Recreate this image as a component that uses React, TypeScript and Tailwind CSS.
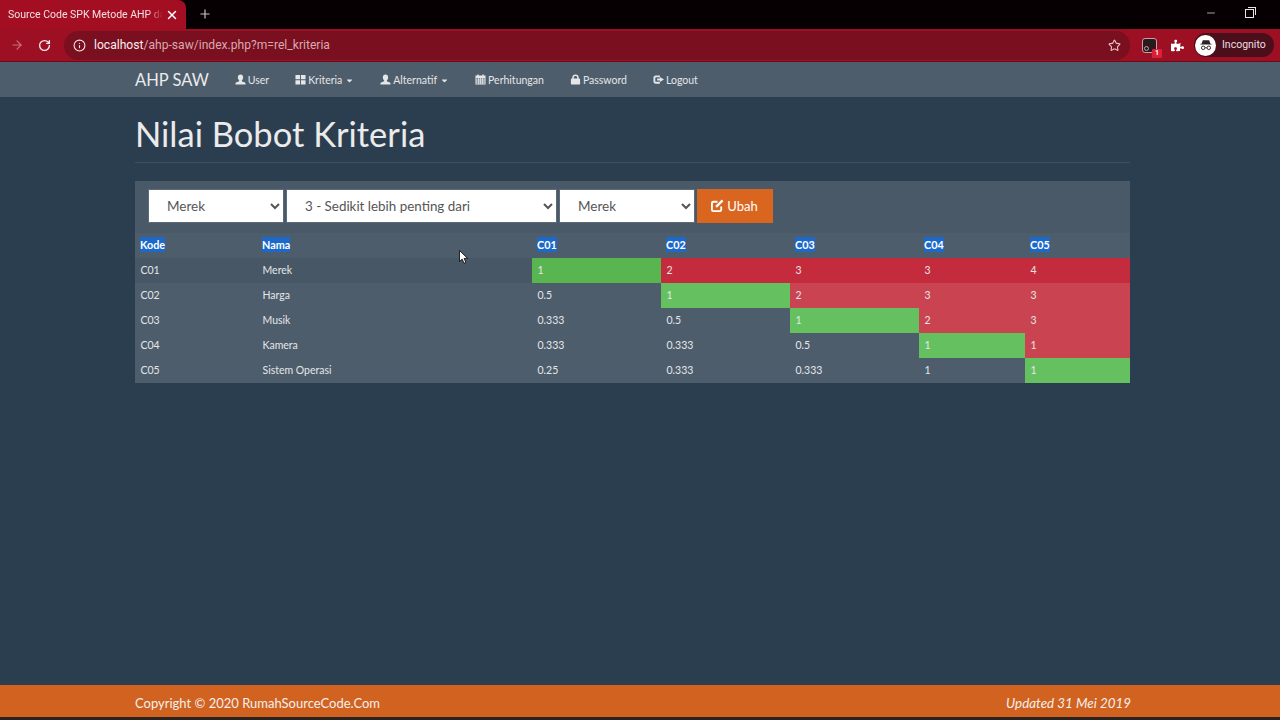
import type { ReactNode } from "react";
import { ArrowRight, RotateCw, Info, Star, Plus, X, Minus } from "lucide-react";
import { FaCaretDown, FaPuzzlePiece } from "react-icons/fa";

const columns = ["C01", "C02", "C03", "C04", "C05"];

const rows = [
  { kode: "C01", nama: "Merek", values: ["1", "2", "3", "3", "4"] },
  { kode: "C02", nama: "Harga", values: ["0.5", "1", "2", "3", "3"] },
  { kode: "C03", nama: "Musik", values: ["0.333", "0.5", "1", "2", "3"] },
  { kode: "C04", nama: "Kamera", values: ["0.333", "0.333", "0.5", "1", "1"] },
  { kode: "C05", nama: "Sistem Operasi", values: ["0.25", "0.333", "0.333", "1", "1"] },
];

// glyphicon style icons, drawn on a 12 box
const glyphs: Record<string, ReactNode> = {
  user: <path d="M6 0.5c1.8 0 2.9 1.4 2.9 3.2 0 1.3-.6 2.5-1.4 3.2v1c0 .5 3.7 1 4 2.1V11.5H.5v-1.5c.3-1.1 4-1.6 4-2.1v-1C3.7 6.200 3.100 5 3.100 3.700 3.100 1.900 4.200.5 6 .5z" />,
  grid: <path d="M0.500 1h5v4.700h-5zM6.500 1h5v4.700h-5zM0.500 6.700h5v4.700h-5zM6.500 6.700h5v4.700h-5z" />,
  calendar: (
    <path
      fillRule="evenodd"
      d="M0.500 1.500h2V.500h1.500v1h4v-1h1.500v1h2v10h-11zM1.500 4.500v1.500h2V4.500zM4.500 4.500v1.500h1.200V4.500zM6.700 4.500v1.500h1.200V4.500zM8.900 4.500v1.500h1.600V4.500zM1.500 7v1.200h2V7zM4.500 7v1.200h1.200V7zM6.700 7v1.200h1.200V7zM8.900 7v1.200h1.600V7zM1.500 9.200v1.200h2V9.200zM4.500 9.200v1.200h1.200V9.200zM6.700 9.200v1.200h1.200V9.200zM8.900 9.200v1.200h1.600V9.200z"
    />
  ),
  lock: (
    <path
      fillRule="evenodd"
      d="M2.500 5V3.800C2.500 1.800 4 .5 6 .5s3.500 1.300 3.500 3.300V5h.5c.6 0 1 .4 1 1v5c0 .3-.2.500-.5.500h-9c-.3 0-.5-.2-.5-.5V6c0-.6.4-1 1-1zM4.200 5h3.600V3.800C7.800 2.800 7 2.200 6 2.200s-1.800.6-1.800 1.600z"
    />
  ),
  logout: (
    <path
      fillRule="evenodd"
      d="M3 1.500h4.500v2H3.500c-.6 0-1 .4-1 1v3c0 .6.4 1 1 1h4v2H3c-1.600 0-2.500-1-2.500-2.500v-4C.5 2.500 1.400 1.500 3 1.500zM7.500 3.200L12 6l-4.500 2.800V7H4.500V5h3z"
    />
  ),
};

function Glyph({ name, className }: { name: string; className: string }) {
  return (
    <svg viewBox="0 0 12 12" className={className} fill="currentColor">
      {glyphs[name]}
    </svg>
  );
}

function BrowserChrome() {
  return (
    <div className="font-['Roboto',sans-serif]">
      <div className="flex h-[29px] items-end bg-[#070003] text-white">
        <div className="flex h-[29px] w-[186px] items-center rounded-tr-lg bg-[#a30e22] pl-[8px] pr-[6px]">
          <span className="w-[155px] overflow-hidden whitespace-nowrap text-[10.500px] text-[#f5dfe2] [mask-image:linear-gradient(to_right,black_90%,transparent)]">
            Source Code SPK Metode AHP dan SAW
          </span>
          <X className="ml-[2px] h-[14px] w-[14px]" strokeWidth={2.5} />
        </div>
        <Plus className="mb-[8px] ml-[12px] h-[14px] w-[14px] text-[#c9c4c5]" strokeWidth={2} />
        <div className="ml-auto mb-[10px] flex items-center gap-[28px] pr-[26px]">
          <Minus className="h-[12px] w-[12px] text-[#d8d8d8]" strokeWidth={1.5} />
          <div className="relative h-[9px] w-[9px] border border-[#e8e8e8]">
            <div className="absolute -right-[3px] -top-[3px] h-[8px] w-[8px] border-r border-t border-[#e8e8e8]" />
          </div>
        </div>
      </div>
      <div className="flex h-[33px] items-center border-b border-[#6d0a19] bg-[#9d0f22] text-white">
        <ArrowRight className="ml-[10px] h-[14px] w-[14px] text-[#c9707c]" strokeWidth={2} />
        <RotateCw className="ml-[14px] h-[13px] w-[13px] text-[#f6e6e8]" strokeWidth={2.5} />
        <div className="ml-[13px] flex h-[29px] w-[1066px] items-center rounded-full bg-[#790f1f] pl-[9px]">
          <Info className="h-[13px] w-[13px] text-[#f6e6e8]" strokeWidth={2} />
          <span className="ml-[8px] text-[12.100px] text-[#d9a9b0]">
            <span className="text-[#f8eef0]">localhost</span>/ahp-saw/index.php?m=rel_kriteria
          </span>
          <Star className="ml-auto mr-[9px] h-[13px] w-[13px] text-[#e8c8cc]" strokeWidth={2} />
        </div>
        <div className="relative ml-[12px] h-[15px] w-[15px] rounded-[3px] border border-[#c8a0a6] bg-[#2a1a1e]">
          <span className="absolute bottom-[1px] left-[1px] h-[5px] w-[5px] rounded-full border border-[#c8a0a6]" />
          <span className="absolute -bottom-[6px] -right-[6px] flex h-[9px] w-[10px] items-center justify-center rounded-[1px] bg-[#d92038] text-[7px] font-bold">
            1
          </span>
        </div>
        <FaPuzzlePiece className="ml-[14px] h-[13px] w-[13px]" />
        <div className="ml-[10px] flex h-[24px] w-[80px] items-center rounded-full bg-[#4a0f1a] pl-[1px]">
          <div className="flex h-[21px] w-[21px] items-center justify-center rounded-full bg-white">
            <svg viewBox="0 0 20 20" className="h-[16px] w-[16px]" fill="#2a2226">
              <path d="M6 4h8l1.500 4.500H17v1H3v-1h1.500z" />
              <circle cx="6.500" cy="13.500" r="2.200" fill="none" stroke="#2a2226" strokeWidth="1.200" />
              <circle cx="13.500" cy="13.500" r="2.200" fill="none" stroke="#2a2226" strokeWidth="1.200" />
              <path d="M8.700 13h2.600v1H8.700z" />
            </svg>
          </div>
          <span className="ml-[6px] text-[10.500px] text-[#eadfe1]">Incognito</span>
        </div>
      </div>
    </div>
  );
}

function NavItem({ icon, label, caret }: { icon: string; label: string; caret?: boolean }) {
  return (
    <a className="flex h-full items-center px-[13px] pt-[2px] text-[10.500px] text-[#e4e6e8]">
      <Glyph name={icon} className="-mt-[2px] mr-[2px] h-[11px] w-[11px]" />
      {label}
      {caret && <FaCaretDown className="ml-[3px] h-[9px] w-[9px]" />}
    </a>
  );
}

function Navbar() {
  return (
    <nav className="h-[35px] bg-[#4e5d6c]">
      <div className="ml-[135px] flex h-full w-[995px] items-center">
        <span className="pt-[1px] text-[16.500px] text-[#ebebeb]">AHP SAW</span>
        <div className="ml-[13px] flex h-full items-center">
          <NavItem icon="user" label="User" />
          <NavItem icon="grid" label="Kriteria" caret />
          <NavItem icon="user" label="Alternatif" caret />
          <NavItem icon="calendar" label="Perhitungan" />
          <NavItem icon="lock" label="Password" />
          <NavItem icon="logout" label="Logout" />
        </div>
      </div>
    </nav>
  );
}

function Picker({ width, value, wide }: { width: string; value: string; wide?: boolean }) {
  return (
    <select
      defaultValue={value}
      className={`h-[34px] ${width} border border-[#5d6a78] bg-white pl-[14px] text-[#555555] ${
        wide ? "text-[13.400px]" : "text-[13.500px]"
      }`}
    >
      <option>{value}</option>
    </select>
  );
}

function cellColor(row: number, col: number) {
  if (row === col) return row === 0 ? "bg-[#58b54f]" : "bg-[#65c15f]";
  if (col > row) return row === 0 ? "bg-[#c42b3c]" : "bg-[#ca4350]";
  return "";
}

function WeightTable() {
  const widths = ["w-[122px]", "w-[275px]", "w-[129px]", "w-[129px]", "w-[129px]", "w-[106px]", "w-[105px]"];
  return (
    <table className="w-[995px] table-fixed border-collapse text-[10.500px] text-[#e4e6e8]">
      <thead>
        <tr className="h-[25px] bg-[#4e5d6c]">
          {["Kode", "Nama", ...columns].map((title, i) => (
            <th key={title} className={`${widths[i]} pl-[5px] text-left text-[10.800px] font-bold`}>
              <span className="inline-block bg-[#1c69c9] leading-[15px] text-white">{title}</span>
            </th>
          ))}
        </tr>
      </thead>
      <tbody>
        {rows.map((row, r) => (
          <tr key={row.kode} className={`h-[25px] ${r === 0 ? "bg-[#485765]" : "bg-[#4e5d6c]"}`}>
            <td className="pl-[5.500px]">{row.kode}</td>
            <td className="pl-[5.500px]">{row.nama}</td>
            {row.values.map((value, c) => (
              <td key={c} className={`pl-[5.500px] ${cellColor(r, c)}`}>
                {value}
              </td>
            ))}
          </tr>
        ))}
      </tbody>
    </table>
  );
}

export default function App() {
  return (
    <div className="relative flex h-[720px] flex-col overflow-hidden bg-[#2b3e50] font-['Lato',sans-serif]">
      <BrowserChrome />
      <Navbar />
      <main className="ml-[135px] w-[995px] flex-1">
        <h1 className="mt-[17px] border-b border-[#3f505f] pb-[9px] text-[34.500px] leading-[39px] text-[#ebebeb]">
          Nilai Bobot Kriteria
        </h1>
        <div className="mt-[18px] flex h-[52px] items-start gap-[2px] bg-[#4a5968] pl-[13px] pt-[8px]">
          <Picker width="w-[136px]" value="Merek" />
          <Picker width="w-[271px]" value="3 - Sedikit lebih penting dari" wide />
          <Picker width="w-[136px]" value="Merek" />
          <button className="flex h-[34px] w-[76px] items-center justify-center bg-[#d9651f] pr-[1px] pt-[1px] text-[13px] text-white">
            <svg viewBox="0 0 14 14" className="-mt-[2px] mr-[3px] h-[13px] w-[13px]" fill="none" stroke="currentColor" strokeWidth="2">
              <path d="M11 8v3.500c0 .8-.6 1.500-1.500 1.500h-7C1.700 13 1 12.300 1 11.500v-7C1 3.600 1.700 3 2.500 3H7" />
              <path d="M5.500 8.500L12.500 1.500" strokeWidth="2.600" />
            </svg>
            Ubah
          </button>
        </div>
        <WeightTable />
      </main>
      <footer className="h-[32px] bg-[#d2621f] pt-[5px] text-[13px] text-[#f3f0ee]">
        <div className="ml-[135px] flex h-full w-[996px] items-center justify-between">
          <span>Copyright © 2020 RumahSourceCode.Com</span>
          <em className="text-[13.400px]">Updated 31 Mei 2019</em>
        </div>
      </footer>
      <div className="h-[3px] bg-[#2a2320]" />
      <svg className="absolute left-[459px] top-[250px] h-[14px] w-[10px]" viewBox="0 0 10 14">
        <path d="M0.500 0.500v11l2.700-2.400 1.800 4.200 1.900-.8-1.800-4.100h3.500z" fill="white" stroke="black" strokeWidth="0.800" />
      </svg>
    </div>
  );
}
